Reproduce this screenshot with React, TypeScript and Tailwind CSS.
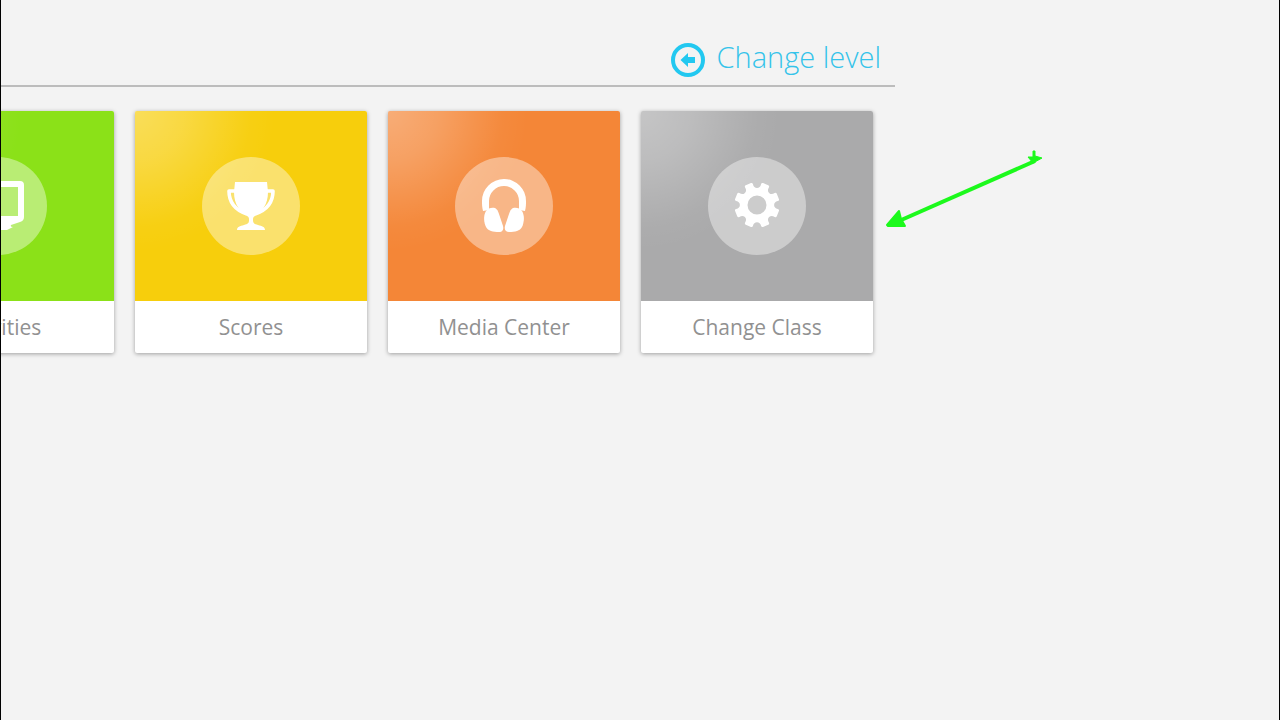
import type { ReactElement, ReactNode } from "react";

// ── Icons, drawn on the 98px disc ──
function MonitorIcon(): ReactElement {
  return (
    <svg viewBox="0 0 98 98" className="w-full" fill="#fff" aria-hidden="true">
      <path
        fillRule="evenodd"
        d="M28 24h43a4 4 0 014 4v32q0 4-4 5l-9 3q-1 2 2 2l-6 3H41l-6-3q3 0 2-2l-9-3q-4-1-4-5V28a4 4 0 014-4zM30 30v29h39V30z"
      />
    </svg>
  );
}

function TrophyIcon(): ReactElement {
  return (
    <svg viewBox="0 0 98 98" className="w-full" aria-hidden="true">
      <path
        fill="#fff"
        d="M33 25h32l1 10c0 13-6 19-13 24-2 1-2 2-2 4 0 3 1 4 5 5s7 2 7 5H35c0-3 3-4 7-5s5-2 5-5c0-2 0-3-2-4-7-5-13-11-13-24z"
      />
      <path
        fill="none"
        stroke="#fff"
        strokeWidth="3.6"
        strokeLinejoin="round"
        d="M34 34h-7c0 12 6 19 18 23M64 34h7c0 12-6 19-18 23"
      />
    </svg>
  );
}

function HeadphonesIcon(): ReactElement {
  return (
    <svg viewBox="0 0 98 98" className="w-full" fill="#fff" aria-hidden="true">
      <path d="M28 54c-1-4-1-7-1-10a22 22 0 0144 0c0 3 0 6-1 10l-6-1V44a15 15 0 00-30 0v9z" />
      <path d="M31 54c2-3 6-4 9-3 2 1 3 3 4 6l4 12c1 4-1 6-4 6-6 0-11-1-13-5s-3-11 0-16z" />
      <path d="M67 54c-2-3-6-4-9-3-2 1-3 3-4 6l-4 12c-1 4 1 6 4 6 6 0 11-1 13-5s3-11 0-16z" />
    </svg>
  );
}

function GearIcon(): ReactElement {
  return (
    <svg viewBox="0 0 98 98" className="w-full" aria-hidden="true">
      <path
        transform="translate(49 48)"
        fill="#fff"
        stroke="#fff"
        strokeWidth="3"
        strokeLinejoin="round"
        fillRule="evenodd"
        d="M-5.500-20.500C-4-14 4-14 5.500-20.500L10.600-18.400C7.100-12.700 12.700-7.100 18.400-10.600L20.500-5.500C14-4 14 4 20.500 5.500L18.400 10.600C12.700 7.100 7.100 12.700 10.600 18.400L5.500 20.500C4 14-4 14-5.500 20.500L-10.600 18.400C-7.100 12.700-12.700 7.100-18.400 10.600L-20.500 5.500C-14 4-14-4-20.500-5.500L-18.400-10.600C-12.700-7.100-7.100-12.700-10.600-18.400ZM0-11A11 11 0 000 11 11 11 0 000-11Z"
      />
    </svg>
  );
}

// ── Tiles of the menu ──
type Tile = { label: string; color: string; icon: ReactNode };

const TILES: Tile[] = [
  { label: "Activities", color: "bg-[#8be118]", icon: <MonitorIcon /> },
  { label: "Scores", color: "bg-[#f7ce0c]", icon: <TrophyIcon /> },
  { label: "Media Center", color: "bg-[#f48637]", icon: <HeadphonesIcon /> },
  { label: "Change Class", color: "bg-[#aaaaab]", icon: <GearIcon /> },
];

function TileCard({ label, color, icon }: Tile): ReactElement {
  return (
    <a
      href="#"
      className="block w-[232px] shrink-0 overflow-hidden rounded-xs bg-white shadow-[0_1px_4px_rgba(0,0,0,0.35)]"
    >
      <div
        className={`flex h-[190px] items-center justify-center bg-[radial-gradient(circle_at_0_0,rgba(255,255,255,0.32)_0,rgba(255,255,255,0.22)_50px,rgba(255,255,255,0.1)_90px,rgba(255,255,255,0.03)_115px,transparent_140px)] ${color}`}
      >
        <div className="size-[98px] rounded-full bg-white/40">{icon}</div>
      </div>
      <div className="py-2.5 text-center text-[21px] leading-8 text-[#919191]">
        {label}
      </div>
    </a>
  );
}

export default function App(): ReactElement {
  return (
    <div className="relative min-h-screen overflow-hidden border-x border-black bg-[#f3f3f3] font-['Open_Sans',sans-serif]">
      <main className="w-full max-w-[894px]">
        <header className="flex justify-end border-b-2 border-[#bcbcbc] pt-9 pr-3.5 pb-2">
          <a
            href="#"
            className="flex items-center gap-3 text-[29px] leading-[41px] font-light text-[#35c3ea]"
          >
            <svg
              viewBox="0 0 34 34"
              className="mt-1.5 size-[34px]"
              aria-hidden="true"
            >
              <circle
                cx="17"
                cy="17"
                r="15"
                fill="none"
                stroke="#22c8f0"
                strokeWidth="4"
              />
              <path fill="#22c8f0" d="M9.500 17l7.500-7v4h7v6h-7v4z" />
            </svg>
            Change level
          </a>
        </header>

        <nav
          className="flex justify-end gap-[21px] pt-6 pr-[22px]"
          aria-label="Class menu"
        >
          {TILES.map((tile) => (
            <TileCard key={tile.label} {...tile} />
          ))}
        </nav>
      </main>

      {/* Arrow pointing at the last tile */}
      <svg
        viewBox="0 0 160 80"
        className="pointer-events-none absolute top-[148px] left-[884px] w-40"
        fill="#1cf91c"
        stroke="#1cf91c"
        strokeLinejoin="round"
        aria-hidden="true"
      >
        <path d="M14 73L150 13" fill="none" strokeWidth="4" />
        <path d="M2 77l12-14 2 8 4 7H3z" strokeWidth="2" />
        <path d="M143 9h5V3h2v5l7 2-9 5z" strokeWidth="1" />
      </svg>
    </div>
  );
}
